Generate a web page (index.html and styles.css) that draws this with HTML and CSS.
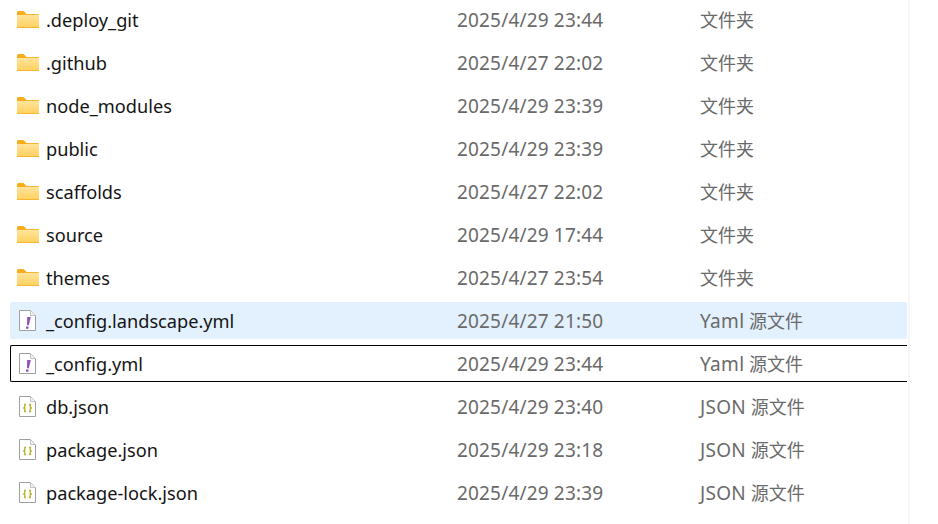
FILE: index.html
```html
<!DOCTYPE html>
<html lang="zh-CN">
<head>
    <meta charset="UTF-8">
    <meta name="viewport" content="width=device-width, initial-scale=1.0">
    <title>File list</title>
    <link rel="stylesheet" href="styles.css">
</head>
<body>

<svg class="defs" width="0" height="0" aria-hidden="true">
    <defs>
        <linearGradient id="folderFront" x1="0" y1="0" x2="0" y2="1">
            <stop offset="0" stop-color="#ffe49c"/>
            <stop offset="1" stop-color="#ffd261"/>
        </linearGradient>
        <symbol id="folder" viewBox="0 0 22 17">
            <path d="M0 2a1 1 0 0 1 1-1h6.5l2 2H21a1 1 0 0 1 1 1v12a1 1 0 0 1-1 1H1a1 1 0 0 1-1-1z" fill="#f5b52e"/>
            <path d="M0 1.500A1.500 1.500 0 0 1 1.500 0h5l2.500 2.500L7 4H0z" fill="#f8ae1c"/>
            <rect x="0" y="4" width="22" height="12" fill="url(#folderFront)"/>
            <rect x="0" y="16" width="22" height="1" fill="#f6b62f"/>
        </symbol>
        <symbol id="page" viewBox="0 0 17 21">
            <path d="M.5.500h11l5 5v15H.5z" fill="#fff" stroke="#a0a0a0"/>
            <path d="M11.500.500v5h5" fill="#f2f2f2" stroke="#c4c4c4"/>
        </symbol>
        <symbol id="file-yaml" viewBox="0 0 17 21">
            <use href="#page"/>
            <path d="M8.200 7h3.600L9.800 15.200H8zM7 16.400h2.500v2.400H7z" fill="#8f52bc"/>
        </symbol>
        <symbol id="file-json" viewBox="0 0 17 21">
            <use href="#page"/>
            <path d="M7 8.500H5.800v2.600l-1 .9 1 .9v2.600H7M10 8.500h1.200v2.600l1 .9-1 .9v2.600H10" fill="none" stroke="#b5b01f" stroke-width="1.300"/>
        </symbol>
    </defs>
</svg>

<main class="file-list">
    <div class="row">
        <svg class="icon-folder"><use href="#folder"/></svg>
        <span class="name">.deploy_git</span>
        <span class="date">2025/4/29 23:44</span>
        <span class="type folder-type">文件夹</span>
    </div>
    <div class="row">
        <svg class="icon-folder"><use href="#folder"/></svg>
        <span class="name">.github</span>
        <span class="date">2025/4/27 22:02</span>
        <span class="type folder-type">文件夹</span>
    </div>
    <div class="row">
        <svg class="icon-folder"><use href="#folder"/></svg>
        <span class="name">node_modules</span>
        <span class="date">2025/4/29 23:39</span>
        <span class="type folder-type">文件夹</span>
    </div>
    <div class="row">
        <svg class="icon-folder"><use href="#folder"/></svg>
        <span class="name">public</span>
        <span class="date">2025/4/29 23:39</span>
        <span class="type folder-type">文件夹</span>
    </div>
    <div class="row">
        <svg class="icon-folder"><use href="#folder"/></svg>
        <span class="name">scaffolds</span>
        <span class="date">2025/4/27 22:02</span>
        <span class="type folder-type">文件夹</span>
    </div>
    <div class="row">
        <svg class="icon-folder"><use href="#folder"/></svg>
        <span class="name">source</span>
        <span class="date">2025/4/29 17:44</span>
        <span class="type folder-type">文件夹</span>
    </div>
    <div class="row">
        <svg class="icon-folder"><use href="#folder"/></svg>
        <span class="name">themes</span>
        <span class="date">2025/4/27 23:54</span>
        <span class="type folder-type">文件夹</span>
    </div>
    <div class="row hovered">
        <svg class="icon-file"><use href="#file-yaml"/></svg>
        <span class="name">_config.landscape.yml</span>
        <span class="date">2025/4/27 21:50</span>
        <span class="type"><span class="latin">Yaml</span> 源文件</span>
    </div>
    <div class="row focused">
        <svg class="icon-file"><use href="#file-yaml"/></svg>
        <span class="name">_config.yml</span>
        <span class="date">2025/4/29 23:44</span>
        <span class="type"><span class="latin">Yaml</span> 源文件</span>
    </div>
    <div class="row">
        <svg class="icon-file"><use href="#file-json"/></svg>
        <span class="name">db.json</span>
        <span class="date">2025/4/29 23:40</span>
        <span class="type"><span class="latin">JSON</span> 源文件</span>
    </div>
    <div class="row">
        <svg class="icon-file"><use href="#file-json"/></svg>
        <span class="name">package.json</span>
        <span class="date">2025/4/29 23:18</span>
        <span class="type"><span class="latin">JSON</span> 源文件</span>
    </div>
    <div class="row">
        <svg class="icon-file"><use href="#file-json"/></svg>
        <span class="name">package-lock.json</span>
        <span class="date">2025/4/29 23:39</span>
        <span class="type"><span class="latin">JSON</span> 源文件</span>
    </div>
</main>

</body>
</html>
```

FILE: styles.css
```css
body {
    margin: 0;
    background-color: #fff;
    font-family: "Noto Sans", "Noto Sans CJK SC", sans-serif;
    font-size: 18px;
    overflow: hidden;
}
.defs {
    position: absolute;
}
.file-list {
    width: 898px;
    height: 523px;
    padding: 1px 0 0 10px;
    display: flex;
    flex-direction: column;
    gap: 6px;
    border-right: 2px solid #f6f6f6;
}
.row {
    flex: none;
    width: 897px;
    height: 37px;
    box-sizing: border-box;
    display: grid;
    grid-template-columns: 29px 411px 243px 1fr;
    align-items: center;
    padding-left: 7px;
}
.hovered {
    background-color: #e2f1fd;
    border-radius: 2px;
}
.focused {
    border: 1px solid #000;
    border-right: none;
    border-radius: 2px 0 0 2px;
    padding-left: 6px;
}
.icon-folder {
    width: 22px;
    height: 17px;
}
.icon-file {
    width: 17px;
    height: 21px;
    margin-left: 2px;
}
.name {
    color: #141414;
    font-size: 18.2px;
    white-space: nowrap;
}
.date, .type {
    color: #6a6a6a;
    white-space: nowrap;
}
.date {
    font-size: 19px;
    letter-spacing: 0.17px;
}
.folder-type {
    padding-bottom: 2px;
}
.latin {
    font-size: 19px;
    letter-spacing: 0.3px;
}
```
